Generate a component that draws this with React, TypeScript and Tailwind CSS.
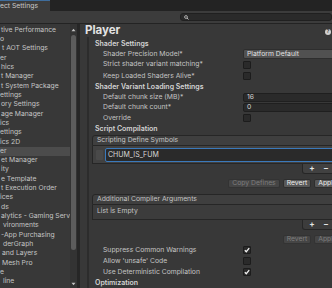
import React from "react";

const ITEMS: [string, string][] = [
  ["tive Performance", "pl-[1px]"],
  ["o", "pl-[0px]"],
  ["t AOT Settings", "pl-[2px]"],
  ["er", "pl-[0px]"],
  ["hics", "pl-[1px]"],
  ["t Manager", "pl-[1px]"],
  ["t System Package", "pl-[1px]"],
  ["ettings", "pl-[0px]"],
  ["ory Settings", "pl-[1px]"],
  ["age Manager", "pl-[1px]"],
  ["ics", "pl-[0px]"],
  ["ettings", "pl-[0px]"],
  ["ics 2D", "pl-[0px]"],
  ["er", "pl-[0px]"],
  ["et Manager", "pl-[1px]"],
  ["ity", "pl-[1px]"],
  ["e Template", "pl-[1px]"],
  ["t Execution Order", "pl-[1px]"],
  ["ices", "pl-[0px]"],
  ["ds", "pl-[1px]"],
  ["alytics - Gaming Services", "pl-[1px]"],
  ["vironments", "pl-[3px]"],
  ["-App Purchasing", "pl-[1px]"],
  ["derGraph", "pl-[3px]"],
  [" and Layers", "pl-[2px]"],
  ["Mesh Pro", "pl-[2px]"],
  ["e", "pl-[0px]"],
  ["line", "pl-[3px]"],
];

function Check({ on }: { on?: boolean }) {
  return (
    <div className="w-[8px] h-[8px] shrink-0 bg-[#2a2a2a] border border-[#1c1c1c] rounded-[1px] flex items-center justify-center">
      {on && (
        <svg width="6" height="6" viewBox="0 0 6 6">
          <path d="M0.8 3.2 L2.3 4.7 L5.2 1.2" stroke="#f0f0f0" strokeWidth="1.3" fill="none" />
        </svg>
      )}
    </div>
  );
}

function Label({ children }: { children: React.ReactNode }) {
  return <div className="w-[154px] shrink-0 pl-[14px] whitespace-nowrap">{children}</div>;
}

function Header({ children, h }: { children: React.ReactNode; h: string }) {
  return (
    <div className={`${h} flex items-center pl-[6px] font-semibold text-[#d4d4d4] text-[7px] whitespace-nowrap`}>
      {children}
    </div>
  );
}

export default function App() {
  return (
    <div className="w-[332px] h-[288px] overflow-hidden bg-[#383838] flex flex-col font-[family-name:Inter,'Noto_Sans',sans-serif] text-[#c4c4c4] text-[6.8px] leading-none">
      {/* tab bar */}
      <div className="h-[11px] shrink-0 bg-[#232323] flex">
        <div className="w-[50px] h-full bg-[#3c3c3c] border-t border-t-[#3f6d9c] flex items-center text-[6.8px] text-[#c8c8c8] whitespace-nowrap overflow-hidden">
          ect Settings
        </div>
      </div>
      {/* toolbar */}
      <div className="h-[13px] shrink-0 bg-[#3c3c3c] border-b border-[#232323] pt-[2px] flex items-start">
        <div className="ml-[180px] w-[160px] h-[8px] rounded-[3px] bg-[#2a2a2a] border border-[#202020] flex items-center pl-[3px]">
          <svg width="5" height="5" viewBox="0 0 5 5">
            <circle cx="2" cy="2" r="1.4" stroke="#c8c8c8" strokeWidth="0.8" fill="none" />
            <path d="M3 3 L4.5 4.5" stroke="#c8c8c8" strokeWidth="0.9" />
          </svg>
        </div>
      </div>
      {/* main */}
      <div className="flex flex-1 min-h-0">
        {/* left list */}
        <div className="w-[70px] shrink-0 overflow-hidden pt-[1.3px] flex flex-col">
          {ITEMS.map(([t, pl], i) => (
            <div
              key={i}
              className={`h-[9.33px] shrink-0 flex items-center whitespace-nowrap ${pl} ${i === 13 ? "bg-[#4c4c4c]" : ""}`}
            >
              {t}
            </div>
          ))}
        </div>
        {/* scrollbar */}
        <div className="w-[7px] shrink-0 bg-[#333333] flex flex-col items-center pt-[4px] pb-[2px]">
          <svg width="5" height="4" viewBox="0 0 5 4" className="shrink-0">
            <path d="M0.5 3.2 L2.5 0.8 L4.5 3.2 Z" fill="#c4c4c4" />
          </svg>
          <div className="mt-[3px] w-[5px] h-[215px] rounded-[3px] bg-[#5c5c5c] shrink-0" />
          <div className="flex-1" />
          <svg width="5" height="4" viewBox="0 0 5 4" className="shrink-0">
            <path d="M0.5 0.8 L2.5 3.2 L4.5 0.8 Z" fill="#c4c4c4" />
          </svg>
        </div>
        <div className="w-[3px] shrink-0 bg-[#262626]" />
        {/* right */}
        <div className="flex-1 min-w-0 overflow-hidden flex flex-col">
          <div className="h-[13px] shrink-0 flex items-center justify-between pl-[5px] pr-[1px]">
            <span className="text-[11.5px] font-bold text-[#e2e2e2]">Player</span>
            <div className="mt-[2px] w-[6px] h-[6px] rounded-full bg-[#d0d0d0] flex items-center justify-center text-[5px] font-bold text-[#383838]">?</div>
          </div>
          <div className="flex flex-1 min-h-0">
            <div className="w-[7px] shrink-0" />
            <div className="w-[2px] shrink-0 bg-[#2c2c2c]" />
            <div className="w-[253px] shrink-0 pt-[1.5px] flex flex-col">
              <Header h="h-[11px]">Shader Settings</Header>
              <div className="h-[10px] flex items-center">
                <Label>Shader Precision Model*</Label>
                <div className="flex-1 h-[10px] bg-[#515151] border border-[#2e2e2e] rounded-[2px] flex items-center pl-[3px] text-[#e2e2e2] whitespace-nowrap">
                  Platform Default
                </div>
              </div>
              <div className="h-[12px] flex items-center">
                <Label>Strict shader variant matching*</Label>
                <Check />
              </div>
              <div className="h-[12px] flex items-center">
                <Label>Keep Loaded Shaders Alive*</Label>
                <Check />
              </div>
              <Header h="h-[11px]">Shader Variant Loading Settings</Header>
              <div className="h-[11px] flex items-center">
                <Label>Default chunk size (MB)*</Label>
                <div className="flex-1 h-[9px] bg-[#2a2a2a] border border-[#1f1f1f] rounded-[2px] flex items-center pl-[3px] text-[#d4d4d4]">16</div>
              </div>
              <div className="h-[11px] flex items-center">
                <Label>Default chunk count*</Label>
                <div className="flex-1 h-[9px] bg-[#2a2a2a] border border-[#1f1f1f] rounded-[2px] flex items-center pl-[3px] text-[#d4d4d4]">0</div>
              </div>
              <div className="h-[11px] flex items-center">
                <Label>Override</Label>
                <Check />
              </div>
              <Header h="h-[11px]">Script Compilation</Header>

              {/* Scripting Define Symbols list */}
              <div className="ml-[3px] mt-[1px] flex flex-col">
                <div className="h-[11px] bg-[#3f3f3f] border border-[#262626] rounded-t-[3px] flex items-center pl-[4px] whitespace-nowrap">
                  Scripting Define Symbols
                </div>
                <div className="bg-[#414141] border-x border-b border-[#262626] pt-[2px] pb-[1px] pl-[3px] flex items-center">
                  <div className="w-[7px] h-[10px] bg-[#4a4a4a] rounded-[1px] shrink-0" />
                  <div className="ml-[2px] flex-1 h-[14px] bg-[#2a2a2a] border border-[#3a79bb] rounded-[2px] flex items-center pl-[2px] text-[#d8d8d8] text-[7px]">
                    CHUM_IS_FUM
                  </div>
                </div>
                <div className="flex justify-end">
                  <div className="w-[36px] h-[10px] mr-[4px] bg-[#414141] border-x border-b border-[#262626] rounded-b-[3px] flex items-center pl-[2px] text-[#e6e6e6] font-bold text-[8px]">
                    <span className="w-[14px] text-center">+</span>
                    <span className="w-[14px] text-center">−</span>
                  </div>
                </div>
              </div>
              <div className="mt-[5px] h-[10px] flex justify-end gap-[3px] pr-[1px]">
                <div className="w-[52px] h-full bg-[#454545] border border-[#333] rounded-[2px] flex items-center justify-center text-[#7e7e7e] whitespace-nowrap">Copy Defines</div>
                <div className="w-[28px] h-full bg-[#585858] border border-[#2e2e2e] rounded-[2px] flex items-center justify-center text-[#eeeeee]">Revert</div>
                <div className="w-[27px] h-full bg-[#585858] border border-[#2e2e2e] rounded-[2px] flex items-center justify-center text-[#eeeeee]">Apply</div>
              </div>

              {/* Additional Compiler Arguments */}
              <div className="ml-[3px] mt-[5.5px] flex flex-col">
                <div className="h-[11px] bg-[#3f3f3f] border border-[#262626] rounded-t-[3px] flex items-center pl-[4px] whitespace-nowrap">
                  Additional Compiler Arguments
                </div>
                <div className="h-[15px] bg-[#3c3c3c] border-x border-b border-[#262626] flex items-center pl-[4px]">List is Empty</div>
                <div className="flex justify-end">
                  <div className="w-[36px] h-[10px] mr-[4px] bg-[#3c3c3c] border-x border-b border-[#262626] rounded-b-[3px] flex items-center pl-[2px] text-[#e6e6e6] font-bold text-[8px]">
                    <span className="w-[14px] text-center">+</span>
                    <span className="w-[14px] text-center">−</span>
                  </div>
                </div>
              </div>
              <div className="mt-[5px] h-[10px] flex justify-end gap-[3px] pr-[1px]">
                <div className="w-[28px] h-full bg-[#454545] border border-[#333] rounded-[2px] flex items-center justify-center text-[#7e7e7e]">Revert</div>
                <div className="w-[27px] h-full bg-[#454545] border border-[#333] rounded-[2px] flex items-center justify-center text-[#7e7e7e]">Apply</div>
              </div>

              <div className="h-[12px] flex items-center">
                <Label>Suppress Common Warnings</Label>
                <Check on />
              </div>
              <div className="h-[11.5px] flex items-center">
                <Label>Allow 'unsafe' Code</Label>
                <Check />
              </div>
              <div className="h-[11.5px] flex items-center">
                <Label>Use Deterministic Compilation</Label>
                <Check on />
              </div>
              <Header h="h-[11px]">Optimization</Header>
            </div>
          </div>
        </div>
      </div>
    </div>
  );
}
